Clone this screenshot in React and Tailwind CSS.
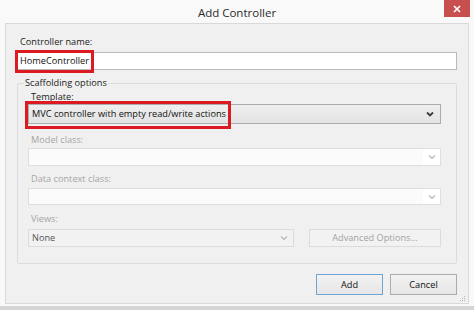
import React from 'react';

const Chevron = ({ dark }) => (
  <svg width="8" height="6" viewBox="0 0 8 6" className="block">
    <polyline
      points="1,1.5 4,4.5 7,1.5"
      fill="none"
      stroke={dark ? '#3a3a3a' : '#b4b4b4'}
      strokeWidth={dark ? 1.8 : 1.1}
    />
  </svg>
);

const Label = ({ children, disabled, className = '' }) => (
  <div className={`h-[15px] leading-[15px] ${disabled ? 'text-[#a6a6a6]' : 'text-[#1b1b1b]'} ${className}`}>
    {children}
  </div>
);

const DisabledCombo = ({ height, className = '' }) => (
  <div className={`flex border border-[#dedede] bg-[#fbfbfb] ${height} ${className}`}>
    <div className="flex-1" />
    <div className="w-[17px] flex items-center justify-center bg-white">
      <Chevron />
    </div>
  </div>
);

export default function App() {
  return (
    <div className="w-[474px] h-[310px] bg-[#d5d5d5] font-['Open_Sans',sans-serif] text-[9.2px] overflow-hidden">
      <div className="h-[306px] bg-[#f9f9f9] flex flex-col px-[5px]">
        {/* title bar */}
        <div className="relative h-[23px] flex items-center justify-center">
          <span className="text-[11.5px] text-[#2b2b2b] leading-none pt-[2px]">Add Controller</span>
          <div className="absolute right-[-1px] top-0 w-[26px] h-[17px] bg-[#c7504f] flex items-center justify-center">
            <svg width="8" height="8" viewBox="0 0 8 8">
              <path d="M1 1 L7 7 M7 1 L1 7" stroke="#fff" strokeWidth="1.6" />
            </svg>
          </div>
        </div>

        {/* body */}
        <div className="h-[281px] border border-[#d9d9d9] bg-[#f0f0f0] px-[11px] pt-[10px] flex flex-col">
          <Label className="pl-[3px]">Controller name:</Label>
          <div className="relative mt-[3px] h-[18px] border border-[#b9b9b9] bg-white flex items-center px-[2px] text-[#111]">
            HomeController
            <div className="absolute left-[-3px] top-[-3px] w-[79px] h-[23px] border-[3px] border-[#dc1a22]" />
          </div>

          {/* group box */}
          <div className="relative mt-[13px] h-[181px] border border-[#dcdcdc] rounded-[2px] px-[10px] pr-[15px] pt-[5px] flex flex-col">
            <div className="absolute left-[6px] top-[-9px] px-[1px] bg-[#f0f0f0] leading-[15px] text-[#1b1b1b]">
              Scaffolding options
            </div>
            <Label className="pl-[3px]">Template:</Label>
            <div className="relative h-[20px] border border-[#acacac] bg-gradient-to-b from-[#efefef] to-[#e3e3e3] flex items-center pl-[3px] pr-[6px] text-[#111]">
              <span className="flex-1">MVC controller with empty read/write actions</span>
              <Chevron dark />
              <div className="absolute left-[-4px] top-[-4px] w-[206px] h-[28px] border-[3px] border-[#dc1a22]" />
            </div>

            <Label disabled className="mt-[8px] pl-[3px]">Model class:</Label>
            <DisabledCombo height="h-[18px]" className="mt-[1px]" />

            <Label disabled className="mt-[5px] pl-[3px]">Data context class:</Label>
            <DisabledCombo height="h-[17px]" className="mt-[2px]" />

            <Label disabled className="mt-[6px] pl-[3px]">Views:</Label>
            <div className="mt-[3px] flex gap-[15px] h-[18px]">
              <div className="w-[266px] flex items-center border border-[#dcdcdc] bg-[#f2f2f2] pl-[3px] pr-[5px] text-[#555]">
                <span className="flex-1">None</span>
                <Chevron />
              </div>
              <div className="flex-1 flex items-center justify-center border border-[#dcdcdc] bg-[#f2f2f2] text-[#a3a3a3]">
                Advanced Options...
              </div>
            </div>
          </div>

          {/* buttons */}
          <div className="relative mt-[10px] flex justify-end gap-[7px]">
            <button className="w-[67px] h-[21px] border border-[#6fa5d3] bg-gradient-to-b from-[#f2f2f2] to-[#e6e6e6] text-[#111]">
              Add
            </button>
            <button className="w-[67px] h-[21px] border border-[#acacac] bg-gradient-to-b from-[#f2f2f2] to-[#e6e6e6] text-[#111]">
              Cancel
            </button>
            <svg className="absolute right-[-9px] bottom-[-7px]" width="6" height="6" viewBox="0 0 6 6">
              <rect x="4" y="0" width="1" height="1" fill="#b8b8b8" />
              <rect x="2" y="2" width="1" height="1" fill="#b8b8b8" />
              <rect x="4" y="2" width="1" height="1" fill="#b8b8b8" />
              <rect x="0" y="4" width="1" height="1" fill="#b8b8b8" />
              <rect x="2" y="4" width="1" height="1" fill="#b8b8b8" />
              <rect x="4" y="4" width="1" height="1" fill="#b8b8b8" />
            </svg>
          </div>
        </div>
      </div>
    </div>
  );
}
